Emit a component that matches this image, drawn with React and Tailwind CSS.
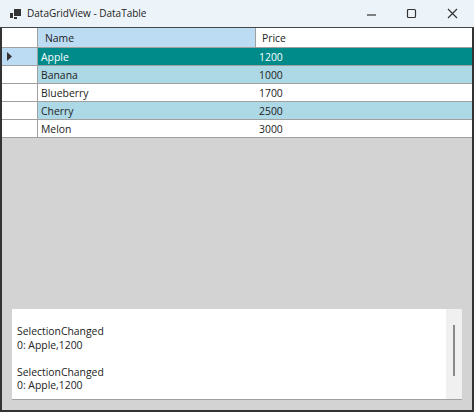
import React from 'react';

const rows = [
  { name: 'Apple', price: 1200, selected: true },
  { name: 'Banana', price: 1000, alt: true },
  { name: 'Blueberry', price: 1700 },
  { name: 'Cherry', price: 2500, alt: true },
  { name: 'Melon', price: 3000 },
];

function Row({ row }) {
  const bg = row.selected ? 'bg-[#008b8b] text-white' : row.alt ? 'bg-[#add8e6] text-[#222]' : 'bg-white text-[#222]';
  return (
    <div className="flex h-[18px] border-b border-[#a0a0a0]">
      <div className={`w-[36px] shrink-0 border-r border-[#a0a0a0] flex items-center pl-[5px] ${row.selected ? 'bg-[#bcdcf4]' : 'bg-white'}`}>
        {row.selected && (
          <svg width="6" height="9" viewBox="0 0 6 9"><path d="M0 0 L5 4.5 L0 9 Z" fill="#333" /></svg>
        )}
      </div>
      <div className={`w-[218px] shrink-0 pl-[3px] pt-[1px] leading-[16px] ${bg}`}>{row.name}</div>
      <div className={`flex-1 pl-[3px] pt-[1px] leading-[16px] ${bg}`}>{row.price}</div>
    </div>
  );
}

export default function App() {
  return (
    <div className="w-[474px] h-[412px] bg-[#333] pl-[2px] pr-[2px] pb-[2px] flex flex-col overflow-hidden font-['Open_Sans','Noto_Sans',sans-serif] text-[10.4px]">
      {/* title bar */}
      <div className="h-[28px] -mx-[2px] shrink-0 bg-[#edf4f9] flex items-center pl-[10px] text-[#222] border-b border-[#444]">
        <svg width="12" height="12" viewBox="0 0 12 12" className="mr-[5px]">
          <rect x="4" y="1" width="7" height="7" fill="#333" />
          <rect x="0" y="5" width="3" height="5" fill="#333" />
          <rect x="4" y="9" width="3" height="2" fill="#333" />
        </svg>
        <span className="text-[10px]">DataGridView - DataTable</span>
        <div className="ml-auto flex items-center">
          <svg width="12" height="12" viewBox="0 0 12 12" className="mr-[28px]"><path d="M1 7 H10" stroke="#333" strokeWidth="1.2" /></svg>
          <svg width="12" height="12" viewBox="0 0 12 12" className="mr-[29px]"><rect x="1.5" y="1.5" width="8" height="8" rx="1" fill="none" stroke="#333" strokeWidth="1.2" /></svg>
          <svg width="12" height="12" viewBox="0 0 12 12" className="mr-[15px]"><path d="M1 1 L10 10 M10 1 L1 10" stroke="#333" strokeWidth="1.2" /></svg>
        </div>
      </div>

      <div className="flex-1 bg-[#d3d3d3] flex flex-col">
        {/* grid */}
        <div className="flex h-[20px] bg-white border-b border-[#a0a0a0] text-[#222]">
          <div className="w-[36px] shrink-0 border-r border-[#a0a0a0]" />
          <div className="w-[218px] shrink-0 bg-[#bcdcf4] border-r border-[#a0a0a0] pl-[7px] pt-[1px] leading-[18px]">Name</div>
          <div className="flex-1 pl-[6px] pt-[1px] leading-[18px]">Price</div>
        </div>
        {rows.map((row) => <Row key={row.name} row={row} />)}

        {/* log box */}
        <div className="mt-auto mb-[10px] mx-[10px] h-[91px] bg-white border-b border-[#a0a0a0] flex text-[#222] leading-[13.5px]">
          <div className="flex-1 pt-[16px] pl-[5px]">
            <div>SelectionChanged</div>
            <div>0: Apple,1200</div>
            <div className="h-[13.5px]" />
            <div>SelectionChanged</div>
            <div>0: Apple,1200</div>
          </div>
          <div className="w-[16px] bg-[#f0f0f0] flex justify-center pt-[16px]">
            <div className="w-[2px] h-[51px] bg-[#8a8a8a]" />
          </div>
        </div>
      </div>
    </div>
  );
}
